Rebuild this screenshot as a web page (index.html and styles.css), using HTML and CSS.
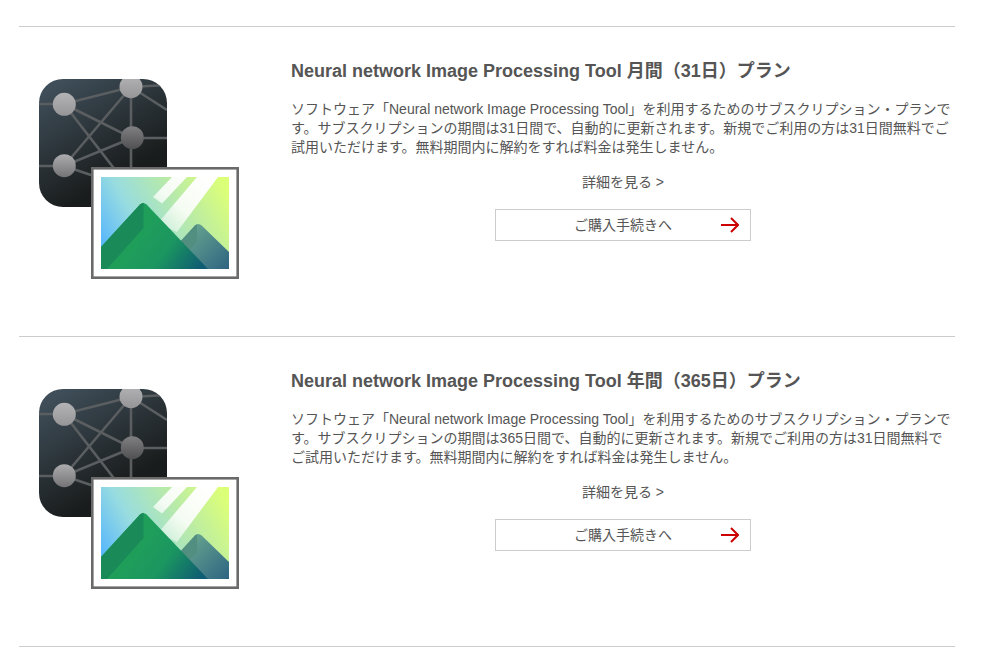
FILE: index.html
```html
<!DOCTYPE html>
<html lang="ja">
<head>
  <meta charset="UTF-8">
  <meta name="viewport" content="width=device-width, initial-scale=1.0">
  <title>Neural network Image Processing Tool</title>
  <link rel="stylesheet" href="styles.css">
</head>
<body>
  <!-- shared product icon -->
  <svg class="defs" width="0" height="0" aria-hidden="true">
    <defs>
      <linearGradient id="tile" x1="0.2" y1="0" x2="0.65" y2="0.75">
        <stop offset="0" stop-color="#3f4e59"/>
        <stop offset="1" stop-color="#191c1c"/>
      </linearGradient>
      <linearGradient id="nodeLight" x1="0" y1="0" x2="0" y2="1">
        <stop offset="0" stop-color="#b4b4b6"/>
        <stop offset="1" stop-color="#959597"/>
      </linearGradient>
      <linearGradient id="nodeLow" x1="0" y1="0" x2="0" y2="1">
        <stop offset="0" stop-color="#acacae"/>
        <stop offset="1" stop-color="#747476"/>
      </linearGradient>
      <linearGradient id="nodeDark" x1="0" y1="0" x2="0" y2="1">
        <stop offset="0" stop-color="#808082"/>
        <stop offset="1" stop-color="#505052"/>
      </linearGradient>
      <linearGradient id="sky" gradientUnits="userSpaceOnUse" x1="66" y1="168" x2="182" y2="102">
        <stop offset="0" stop-color="#5ab8fa"/>
        <stop offset="0.3" stop-color="#98dce0"/>
        <stop offset="0.65" stop-color="#b8eaa8"/>
        <stop offset="1" stop-color="#dcff78"/>
      </linearGradient>
      <linearGradient id="streak" gradientUnits="userSpaceOnUse" x1="165" y1="98" x2="118" y2="152">
        <stop offset="0" stop-color="#fff" stop-opacity="1"/>
        <stop offset="0.55" stop-color="#fff" stop-opacity="0.85"/>
        <stop offset="1" stop-color="#fff" stop-opacity="0.3"/>
      </linearGradient>
      <linearGradient id="peak" gradientUnits="userSpaceOnUse" x1="105" y1="150" x2="160" y2="190">
        <stop offset="0" stop-color="#1f9e5a"/>
        <stop offset="0.45" stop-color="#1b9660"/>
        <stop offset="1" stop-color="#0f5d72"/>
      </linearGradient>
      <linearGradient id="peakBack" gradientUnits="userSpaceOnUse" x1="150" y1="150" x2="190" y2="190">
        <stop offset="0" stop-color="#66a48e"/>
        <stop offset="1" stop-color="#2e6482"/>
      </linearGradient>
      <clipPath id="tileClip"><rect width="128" height="128" rx="24"/></clipPath>
      <symbol id="product" viewBox="0 0 200 200">
        <g clip-path="url(#tileClip)">
          <rect width="128" height="128" fill="url(#tile)"/>
          <g fill="none" stroke="#5a5e60" stroke-width="2.6">
            <path d="M0 25H25L92 8L128 6"/>
            <path d="M92 8L128 31"/>
            <path d="M92 8V128"/>
            <path d="M92 8L25 87"/>
            <path d="M25 25L93 59H128"/>
            <path d="M25 25L105 128"/>
            <path d="M0 87H25L93 59"/>
            <path d="M25 87L100 112"/>
          </g>
          <circle cx="25.3" cy="25.3" r="11.5" fill="url(#nodeLight)"/>
          <circle cx="92" cy="7.7" r="11.5" fill="url(#nodeLight)"/>
          <circle cx="93.3" cy="58.7" r="11.5" fill="url(#nodeDark)"/>
          <circle cx="25.3" cy="86.7" r="11.5" fill="url(#nodeLow)"/>
        </g>
        <rect x="53.3" y="89.3" width="145.4" height="109.4" fill="#fff" stroke="#6a6a6a" stroke-width="2.6"/>
        <rect x="62" y="98" width="128" height="92" fill="url(#sky)"/>
        <path d="M133 98H148L123 124.5L114 118Z" fill="url(#streak)"/>
        <path d="M158 98H179L138 153L119 144Z" fill="url(#streak)"/>
        <path d="M142.7 161L156 146.5Q159.3 143.5 162.6 146.5L190 173V190H150L135 170Z" fill="url(#peakBack)"/>
        <path d="M142.7 161L156 146.5Q157 145.5 158 145.3V163L150 172L135 170Z" fill="#528f80"/>
        <path d="M62 168L101 125.5Q104.3 122.5 107.6 125.5L169 190H62Z" fill="url(#peak)"/>
        <path d="M62 168L101 125.5Q103 123.7 104.5 123.7V149L68 190H62Z" fill="#1a8a58"/>
      </symbol>
    </defs>
  </svg>

  <div class="plans">
    <div class="plan">
      <svg class="plan-icon"><use href="#product"/></svg>
      <div class="plan-body">
        <h2>Neural network Image Processing Tool 月間（31日）プラン</h2>
        <p>ソフトウェア「Neural network Image Processing Tool」を利用するためのサブスクリプション・プランです。サブスクリプションの期間は31日間で、自動的に更新されます。新規でご利用の方は31日間無料でご試用いただけます。無料期間内に解約をすれば料金は発生しません。</p>
        <a class="detail" href="#">詳細を見る &gt;</a>
        <a class="buy" href="#">ご購入手続きへ
          <svg class="arrow" viewBox="0 0 18 16"><path d="M0 8H17M10 1L17 8L10 15" fill="none" stroke="#c00" stroke-width="2"/></svg>
        </a>
      </div>
    </div>
    <div class="plan">
      <svg class="plan-icon"><use href="#product"/></svg>
      <div class="plan-body">
        <h2>Neural network Image Processing Tool 年間（365日）プラン</h2>
        <p>ソフトウェア「Neural network Image Processing Tool」を利用するためのサブスクリプション・プランです。サブスクリプションの期間は365日間で、自動的に更新されます。新規でご利用の方は31日間無料でご試用いただけます。無料期間内に解約をすれば料金は発生しません。</p>
        <a class="detail" href="#">詳細を見る &gt;</a>
        <a class="buy" href="#">ご購入手続きへ
          <svg class="arrow" viewBox="0 0 18 16"><path d="M0 8H17M10 1L17 8L10 15" fill="none" stroke="#c00" stroke-width="2"/></svg>
        </a>
      </div>
    </div>
  </div>
</body>
</html>
```

FILE: styles.css
```css
* { margin: 0; padding: 0; box-sizing: border-box; }
body {
  background: #fff;
  color: #555;
  font-family: "Liberation Sans", "Noto Sans CJK JP", sans-serif;
  font-size: 14px;
}

.defs { display: block; height: 0; }

.plans {
  width: 936px;
  margin: 26px 0 0 19px;
  border-bottom: 1px solid #ccc;
}

.plan {
  display: flex;
  height: 310px;
  border-top: 1px solid #ccc;
  padding: 34px 0 0 20px;
}

.plan-icon {
  width: 200px;
  height: 200px;
  margin: 18px 52px 0 0;
  flex-shrink: 0;
}

.plan-body { flex: 1; }

.plan-body h2 {
  font-size: 18px;
  line-height: 20px;
  font-weight: bold;
  margin-bottom: 19px;
}

.plan-body p { line-height: 19px; }

.detail {
  display: block;
  text-align: center;
  color: #555;
  text-decoration: none;
  line-height: 20px;
  margin-top: 15px;
}

.buy {
  position: relative;
  display: block;
  width: 256px;
  height: 32px;
  margin: 17px auto 0;
  border: 1px solid #ccc;
  text-align: center;
  line-height: 30px;
  color: #555;
  text-decoration: none;
}

.arrow {
  position: absolute;
  right: 11px;
  top: 7px;
  width: 18px;
  height: 16px;
}
```
